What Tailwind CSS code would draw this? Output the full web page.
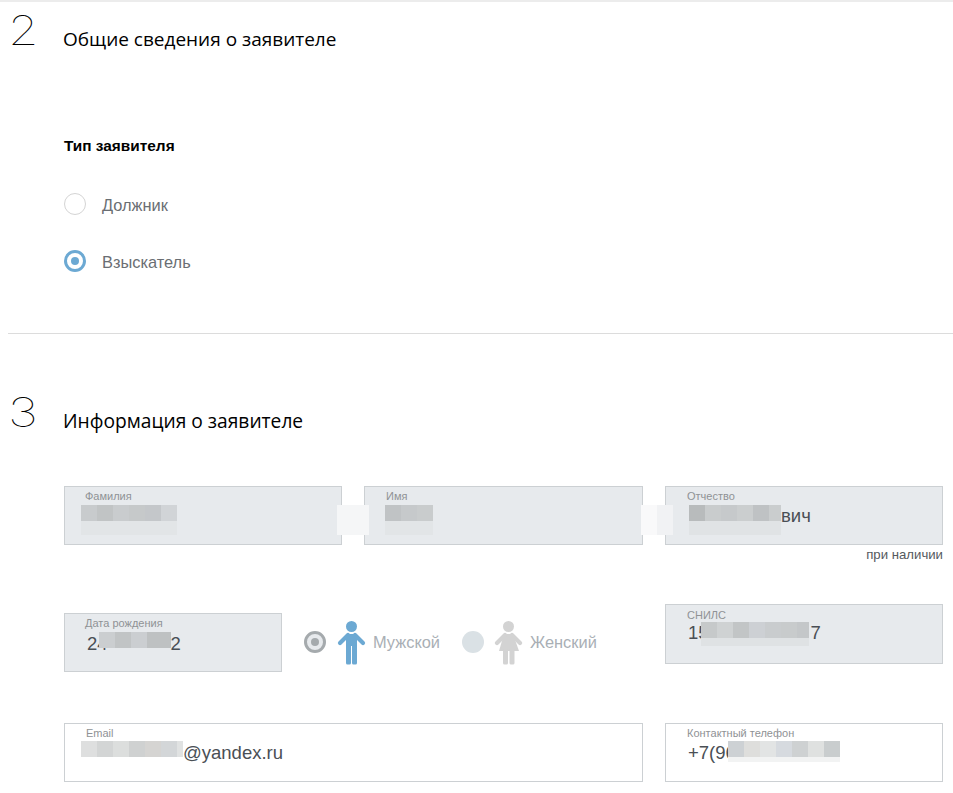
<!DOCTYPE html>
<html lang="ru">
<head>
    <meta charset="UTF-8">
    <title>Информация о заявителе</title>
    <script src="https://cdn.jsdelivr.net/npm/@tailwindcss/browser@4"></script>
</head>
<body class="bg-white overflow-hidden font-['Liberation_Sans',sans-serif]">
    <div class="h-[793px] overflow-hidden">
        <div class="h-[2px] bg-[#ececec]"></div>

        <!-- Section 2 -->
        <div class="flex items-start h-[74px] pl-[8px]">
            <div class="w-[55px] pt-[2px] text-[41px] leading-[52px] font-thin text-black font-['Inter',sans-serif]"><span class="inline-block origin-left scale-x-[1.2]">2</span></div>
            <h2 class="pt-[24px] text-[19px] leading-[26px] text-black font-['Open_Sans',sans-serif]">Общие сведения о заявителе</h2>
        </div>
        <div class="pl-[56px] pt-[60px] h-[258px] border-b border-[#dcdcdc] ml-[8px]">
            <div class="text-[15.4px] leading-[20px] font-bold text-black">Тип заявителя</div>
            <div class="flex items-center gap-[16px] mt-[37px] h-[24px]">
                <span class="w-[22px] h-[22px] -mt-[2px] rounded-full border border-[#d4d4d4]"></span>
                <span class="text-[16.4px] text-[#6a6e73]">Должник</span>
            </div>
            <div class="flex items-center gap-[16px] mt-[33px] h-[24px]">
                <span class="flex items-center justify-center w-[22px] h-[22px] -mt-[2px] rounded-full border-[3px] border-[#6ca9d3]"><span class="w-[8px] h-[8px] rounded-full bg-[#6ca9d3]"></span></span>
                <span class="text-[16.4px] text-[#6a6e73]">Взыскатель</span>
            </div>
        </div>

        <!-- Section 3 -->
        <div class="flex items-start h-[152px] pl-[8px]">
            <div class="w-[55px] pt-[52px] text-[41px] leading-[52px] font-thin text-black font-['Inter',sans-serif]"><span class="inline-block origin-left scale-x-[1.25]">3</span></div>
            <h2 class="pt-[74px] text-[19.2px] leading-[26px] text-black font-['Open_Sans',sans-serif]">Информация о заявителе</h2>
        </div>

        <div class="pl-[64px] pr-[10px]">
            <div class="grid grid-cols-[278px_279px_278px] gap-x-[22px] h-[118px]">
                <div class="relative h-[59px] border border-[#ccd0d3] bg-[#e7eaed] pl-[20px] pt-[3px]">
                    <div class="text-[11px] leading-[13px] text-[#8f9295]">Фамилия</div>
                    <div class="absolute left-[16px] top-[18px] flex h-[16px] w-[96px]">
                        <i class="w-[16px] bg-[#c8cbcd]"></i><i class="w-[16px] bg-[#c1c4c5]"></i><i class="w-[16px] bg-[#c9ccce]"></i><i class="w-[16px] bg-[#c6c9ca]"></i><i class="w-[16px] bg-[#c4c7ca]"></i><i class="w-[16px] bg-[#d1d4d7]"></i>
                    </div>
                    <div class="absolute left-[16px] top-[34px] h-[14px] w-[96px] bg-[#e2e5e7]"></div>
                </div>
                <div class="relative h-[59px] border border-[#ccd0d3] bg-[#e7eaed] pl-[21px] pt-[3px]">
                    <div class="text-[11px] leading-[13px] text-[#8f9295]">Имя</div>
                    <div class="absolute left-[20px] top-[18px] flex h-[16px] w-[48px]">
                        <i class="w-[16px] bg-[#c0c3c5]"></i><i class="w-[16px] bg-[#c6c9cb]"></i><i class="w-[16px] bg-[#c9cccd]"></i>
                    </div>
                    <div class="absolute left-[20px] top-[34px] h-[14px] w-[48px] bg-[#e2e5e7]"></div>
                    <div class="absolute -left-[28px] top-[18px] h-[30px] w-[32px] bg-[#f5f6f7]"></div>
                </div>
                <div class="relative h-[59px] border border-[#ccd0d3] bg-[#e7eaed] pl-[21px] pt-[3px]">
                    <div class="text-[11px] leading-[13px] text-[#8f9295]">Отчество</div>
                    <div class="pl-[94px] text-[18.5px] leading-[22px] mt-[2px] text-[#4a4f55]">вич</div>
                    <div class="absolute left-[23px] top-[18px] flex h-[16px] w-[92px]">
                        <i class="w-[16px] bg-[#b8bbbc]"></i><i class="w-[16px] bg-[#c9cccd]"></i><i class="w-[16px] bg-[#c6c9cb]"></i><i class="w-[16px] bg-[#cbcecf]"></i><i class="w-[16px] bg-[#bfc2c4]"></i><i class="w-[12px] bg-[#cacdce]"></i>
                    </div>
                    <div class="absolute left-[23px] top-[34px] h-[14px] w-[92px] bg-[#e0e3e5]"></div>
                    <div class="absolute -left-[25px] top-[18px] flex h-[30px] w-[32px]"><i class="w-[16px] bg-[#f9f9fa]"></i><i class="w-[16px] bg-[#f1f2f4]"></i></div>
                    <div class="absolute -right-[1px] -bottom-[18px] text-[13.2px] leading-[15px] text-[#55595e]">при наличии</div>
                </div>
            </div>

            <div class="flex items-start h-[119px]">
                <div class="relative mt-[9px] h-[59px] w-[218px] border border-[#ccd0d3] bg-[#e7eaed] pl-[20px] pt-[3px]">
                    <div class="text-[11px] leading-[13px] text-[#8f9295]">Дата рождения</div>
                    <div class="pl-[2px] text-[18.5px] leading-[22px] mt-[3px] text-[#4a4f55]">24<span class="pl-[63px]">2</span></div>
                    <div class="absolute left-[34px] top-[18px] flex h-[16px] w-[72px]">
                        <i class="w-[16px] bg-[#cbced0]"></i><i class="w-[16px] bg-[#c1c4c5]"></i><i class="w-[16px] bg-[#cbced1]"></i><i class="w-[24px] bg-[#bec1c2]"></i>
                    </div>
                </div>
                <div class="flex items-center w-[383px] h-[48px] mt-[14px] pl-[22px]">
                    <span class="flex items-center justify-center w-[22px] h-[22px] rounded-full border-[3px] border-[#a5aaad] bg-[#e7eaed]"><span class="w-[8px] h-[8px] rounded-full bg-[#a5aaad]"></span></span>
                    <svg class="ml-[11px]" width="29" height="46" viewBox="0 -1 29 46">
                        <circle cx="14.500" cy="6.500" r="5.500" fill="#6ca9d3"/>
                        <path d="M9 14h11v12h-11z" fill="#6ca9d3"/>
                        <path d="M11 15 3 23M18 15l8 8" stroke="#6ca9d3" stroke-width="4.200" stroke-linecap="round" fill="none"/>
                        <rect x="9" y="24" width="5" height="20.500" rx="1.500" fill="#6ca9d3"/>
                        <rect x="15" y="24" width="5" height="20.500" rx="1.500" fill="#6ca9d3"/>
                    </svg>
                    <span class="ml-[7px] text-[16.4px] text-[#a9afb5]">Мужской</span>
                    <span class="ml-[22px] w-[22px] h-[22px] rounded-full bg-[#dae1e5]"></span>
                    <svg class="ml-[10px]" width="29" height="46" viewBox="0 -1 29 46">
                        <circle cx="14.500" cy="6.500" r="5.500" fill="#d3d3d3"/>
                        <path d="M10 14h9l6 17h-20z" fill="#d3d3d3"/>
                        <path d="M11 15 3 23M18 15l8 8" stroke="#d3d3d3" stroke-width="4.200" stroke-linecap="round" fill="none"/>
                        <rect x="9" y="29" width="5" height="15.500" rx="1.500" fill="#d3d3d3"/>
                        <rect x="15.500" y="29" width="5" height="15.500" rx="1.500" fill="#d3d3d3"/>
                    </svg>
                    <span class="ml-[7px] text-[16.4px] text-[#a9afb5]">Женский</span>
                </div>
                <div class="relative h-[60px] w-[278px] border border-[#ccd0d3] bg-[#e7eaed] pl-[21px] pt-[4px]">
                    <div class="text-[11px] leading-[13px] text-[#8f9295]">СНИЛС</div>
                    <div class="pl-[1px] text-[18.5px] leading-[22px] text-[#4a4f55]">15<span class="pl-[102px]">7</span></div>
                    <div class="absolute left-[35px] top-[17px] flex h-[16px] w-[108px]">
                        <i class="w-[16px] bg-[#c6c9ca]"></i><i class="w-[16px] bg-[#cfd2d3]"></i><i class="w-[16px] bg-[#c2c5c6]"></i><i class="w-[16px] bg-[#cdd0d4]"></i><i class="w-[16px] bg-[#c9ccce]"></i><i class="w-[16px] bg-[#c8cbcc]"></i><i class="w-[12px] bg-[#c4c7c9]"></i>
                    </div>
                    <div class="absolute left-[35px] top-[33px] h-[8px] w-[108px] bg-[#dfe2e4]"></div>
                </div>
            </div>

            <div class="grid grid-cols-[579px_278px] gap-x-[22px]">
                <div class="relative h-[59px] border border-[#ccd0d3] pl-[21px] pt-[3px]">
                    <div class="text-[11px] leading-[13px] text-[#8f9295]">Email</div>
                    <div class="pl-[97px] text-[18.5px] leading-[22px] mt-[2px] text-[#4a4f55]">@yandex.ru</div>
                    <div class="absolute left-[16px] top-[17px] flex h-[16px] w-[102px]">
                        <i class="w-[16px] bg-[#dedfdf]"></i><i class="w-[16px] bg-[#d3d5d5]"></i><i class="w-[16px] bg-[#dcdedd]"></i><i class="w-[16px] bg-[#cfd1d1]"></i><i class="w-[16px] bg-[#d5d4d2]"></i><i class="w-[16px] bg-[#d3d6d8]"></i><i class="w-[6px] bg-[#e0e2e2]"></i>
                    </div>
                </div>
                <div class="relative h-[59px] border border-[#ccd0d3] pl-[21px] pt-[3px]">
                    <div class="text-[11px] leading-[13px] text-[#8f9295]">Контактный телефон</div>
                    <div class="pl-[1px] text-[18.5px] leading-[22px] mt-[2px] text-[#4a4f55]">+7(96</div>
                    <div class="absolute left-[62px] top-[17px] flex h-[16px] w-[112px]">
                        <i class="w-[16px] bg-[#cdd1d4]"></i><i class="w-[16px] bg-[#dededc]"></i><i class="w-[16px] bg-[#e2e4e4]"></i><i class="w-[16px] bg-[#d6dadf]"></i><i class="w-[16px] bg-[#ced1d2]"></i><i class="w-[16px] bg-[#dfe1e0]"></i><i class="w-[16px] bg-[#c9cdce]"></i>
                    </div>
                    <div class="absolute left-[62px] top-[33px] h-[5px] w-[112px] bg-[#f2f3f3]"></div>
                </div>
            </div>
        </div>
    </div>
</body>
</html>
